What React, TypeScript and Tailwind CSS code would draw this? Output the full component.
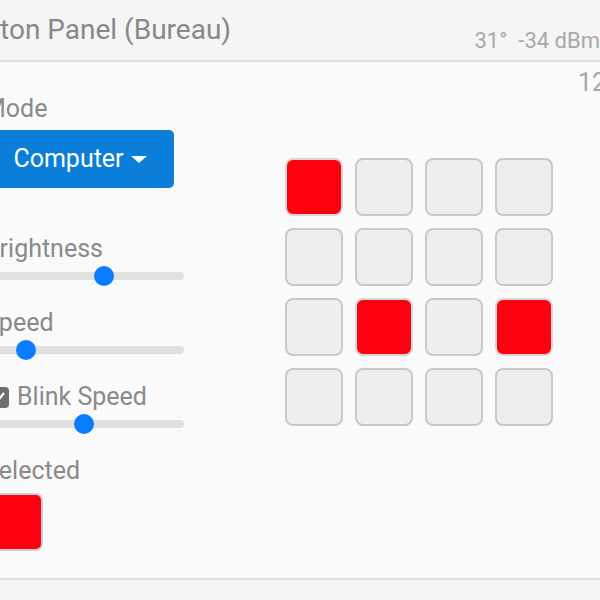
import React from "react";

const cells = [
  [1, 0, 0, 0],
  [0, 0, 0, 0],
  [0, 1, 0, 1],
  [0, 0, 0, 0],
];

function Slider({ value }: { value: number }) {
  return (
    <div className="relative mt-[2px] h-[20px] w-[200px]">
      <div className="absolute left-0 right-0 top-[6px] h-[8px] rounded-full bg-[#e0e0e0]" />
      <div
        className="absolute top-0 h-[20px] w-[20px] -translate-x-1/2 rounded-full bg-[#0a7cff]"
        style={{ left: `${value}%` }}
      />
    </div>
  );
}

export default function App() {
  return (
    <div
      className="relative h-[600px] w-[600px] overflow-hidden bg-[#fafafa]"
      style={{ fontFamily: "Roboto, 'Noto Sans', sans-serif" }}
    >
      <div className="-ml-[35px] flex h-[600px] w-[640px] flex-col">
        <div className="flex h-[62px] shrink-0 items-start justify-between border-b-2 border-[#dcdcdc] bg-[#f5f5f5] pr-[5px]">
          <div className="-ml-[7px] pt-[13px] text-[28px] leading-[34px] text-[#888888] whitespace-nowrap">
            Button Panel (Bureau)
          </div>
          <div className="pt-[28px] text-[22px] leading-[26px] text-[#a8a8a8] whitespace-pre">
            31°  -34 dBm
          </div>
        </div>
        <div className="relative flex h-[516px] shrink-0">
          <div className="absolute left-[613px] top-[6px] text-[25px] leading-[30px] text-[#a8a8a8] whitespace-nowrap">
            12
          </div>
          <div className="flex w-[219px] flex-col pl-[19px] pt-[32px] text-[25px] leading-[30px] text-[#8a8a8a]">
            <div>Mode</div>
            <button className="mt-[6px] flex h-[58px] w-[190px] items-center justify-center gap-[7px] rounded-[5px] bg-[#0a7ed8] pl-[2px] text-[25px] text-white">
              <span>Computer</span>
              <span className="mt-[1px] h-0 w-0 border-x-[8px] border-t-[7px] border-x-transparent border-t-white" />
            </button>
            <div className="mt-[46px]">Brightness</div>
            <Slider value={60} />
            <div className="mt-[22px]">Speed</div>
            <Slider value={21} />
            <div className="mt-[22px] flex items-center gap-[8px]">
              <span className="ml-[4px] flex h-[21px] w-[21px] items-center justify-center rounded-[4px] bg-[#6e6e6e]">
                <svg width="14" height="14" viewBox="0 0 14 14">
                  <path d="M2 7.5 L5.5 11 L12 3" fill="none" stroke="white" strokeWidth="2.2" />
                </svg>
              </span>
              <span>Blink Speed</span>
            </div>
            <Slider value={50} />
            <div className="mt-[22px]">Selected</div>
            <div className="mt-[7px] h-[58px] w-[59px] rounded-[7px] border-2 border-[#cfcfcf] bg-[#ff0010]" />
          </div>
          <div className="ml-[101px] mt-[96px] grid h-fit grid-cols-4 gap-[12px]">
            {cells.flat().map((on, i) => (
              <div
                key={i}
                className={
                  on
                    ? "h-[58px] w-[58px] rounded-[8px] border-2 border-[#d6d6d6] bg-[#ff0010]"
                    : "h-[58px] w-[58px] rounded-[8px] border-2 border-[#c9c9c9] bg-[#eeeeee]"
                }
              />
            ))}
          </div>
        </div>
        <div className="flex-1 border-t-2 border-[#dcdcdc] bg-[#f5f5f5]" />
      </div>
    </div>
  );
}
